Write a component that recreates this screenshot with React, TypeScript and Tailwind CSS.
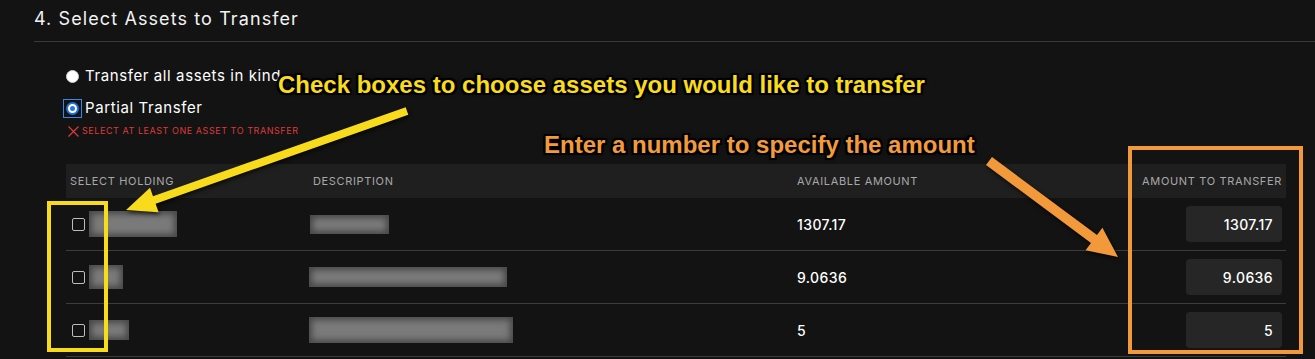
import React from "react";

const rows = [
  { hw: 88, hh: 26, dw: 79, dh: 19, dml: 1, avail: "1307.17" },
  { hw: 34, hh: 24, dw: 198, dh: 20, dml: 0, avail: "9.0636" },
  { hw: 40, hh: 20, dw: 204, dh: 26, dml: 0, avail: "5" },
];

const outline =
  "[text-shadow:-2px_-2px_0_#000,2px_-2px_0_#000,-2px_2px_0_#000,2px_2px_0_#000,0_-2px_0_#000,0_2px_0_#000,-2px_0_0_#000,2px_0_0_#000,0_0_5px_#000]";

function Blur({ w, h, ml }: { w: number; h: number; ml?: number }) {
  return (
    <div
      className="shrink-0 bg-[#7a7a7a] shadow-[inset_0_0_6px_3px_#474747]"
      style={{ width: w, height: h, marginLeft: ml ?? 0 }}
    />
  );
}

export default function App() {
  return (
    <div className="relative w-[1315px] h-[359px] overflow-hidden bg-[#131313] text-white font-['Inter',sans-serif]">
      <div className="pl-[34px]">
        <div className="pt-[7px] text-[18px] leading-[24px] tracking-[1.1px] text-[#f2f2f2]">4. Select Assets to Transfer</div>
        <div className="mt-[10px] h-px bg-[#3a3a3a]" />
        <div className="pl-[32px] pr-[29px]">
          <div className="mt-[24px] flex items-center h-[20px] gap-[6px]">
            <span className="block w-[13px] h-[13px] rounded-full bg-white border border-[#cfcfcf]" />
            <span className="text-[15px] leading-[20px] tracking-[0.6px] text-white">Transfer all assets in kind</span>
          </div>
          <div className="mt-[12px] flex items-center h-[20px] gap-[6px]">
            <span className="relative block w-[13px] h-[13px]">
              <span className="flex w-[13px] h-[13px] rounded-full bg-[#1f6fe5] items-center justify-center">
                <span className="block w-[9px] h-[9px] rounded-full border-[2px] border-white bg-[#2a74e0]" />
              </span>
              <span className="absolute -inset-[3px] border border-[#3a86e6]" />
            </span>
            <span className="text-[15px] leading-[20px] tracking-[0.6px] text-white">Partial Transfer</span>
          </div>
          <div className="mt-[7px] flex items-center h-[12px] pl-[2px] gap-[3px]">
            <svg width="11" height="11" viewBox="0 0 11 11">
              <path d="M0.5 0.5 L10.5 10.5 M10.5 0.5 L0.5 10.5" stroke="#dc3a3a" strokeWidth="1.2" />
            </svg>
            <span className="text-[9px] leading-[12px] tracking-[0.55px] text-[#dc3a3a] uppercase">
              Select at least one asset to transfer
            </span>
          </div>

          <div className="mt-[27px]">
            <div className="grid grid-cols-[243px_484px_1fr_auto] h-[34px] items-center bg-[#1f1f1f] text-[11px] tracking-[0.65px] text-[#a8a8a8] uppercase">
              <div className="pl-[4px]">Select Holding</div>
              <div className="pl-[4px]">Description</div>
              <div className="pl-[4px]">Available Amount</div>
              <div className="pr-[4px] text-right">Amount to Transfer</div>
            </div>
            {rows.map((r, i) => (
              <div
                key={i}
                className="grid grid-cols-[243px_484px_1fr_auto] h-[53px] items-center border-b border-[#3c3c3c]"
              >
                <div className="flex items-center pl-[6px] gap-[4px]">
                  <span className="block w-[13px] h-[13px] rounded-[2px] border border-[#bdbdbd]" />
                  <Blur w={r.hw} h={r.hh} />
                </div>
                <div className="flex items-center">
                  <Blur w={r.dw} h={r.dh} ml={r.dml} />
                </div>
                <div className="pl-[4px] text-[14px] tracking-[0.4px] font-medium text-white">{r.avail}</div>
                <div className="pr-[4px] flex justify-end">
                  <div className="w-[96px] h-[36px] rounded-[4px] bg-[#262626] flex items-center justify-end pr-[9px] text-[14px] tracking-[0.4px] font-medium text-white">
                    {r.avail}
                  </div>
                </div>
              </div>
            ))}
          </div>
        </div>
      </div>

      {/* Annotations overlay */}
      <div
        className={`absolute left-[278px] top-[73px] text-[24px] leading-[24px] font-bold whitespace-nowrap text-[#f9dc1c] font-['Liberation_Sans',Arial,sans-serif] ${outline}`}
      >
        Check boxes to choose assets you would like to transfer
      </div>
      <div
        className={`absolute left-[544px] top-[133px] text-[24px] leading-[24px] font-bold whitespace-nowrap text-[#f39b3c] font-['Liberation_Sans',Arial,sans-serif] ${outline}`}
      >
        Enter a number to specify the amount
      </div>
      <div className="absolute left-[47px] top-[201px] w-[61px] h-[151px] border-[4px] border-[#f8dc1c]" />
      <div className="absolute left-[1128px] top-[146px] w-[175px] h-[208px] border-[4px] border-[#f29a3b]" />
      <svg
        className="absolute left-0 top-0 pointer-events-none [filter:drop-shadow(1px_2px_2px_rgba(0,0,0,0.7))]"
        width="1315"
        height="359"
        viewBox="0 0 1315 359"
      >
        <polygon
          points="405.7,107.2 153,196.2 150,187.7 126,210 158.6,212.3 155.6,203.8 408.3,114.8"
          fill="#f8dc1c"
        />
        <polygon
          points="992,157 1097,235 1102.4,227.8 1118,257 1085.6,250.2 1091,243 986,165"
          fill="#f29a3b"
        />
      </svg>
    </div>
  );
}
